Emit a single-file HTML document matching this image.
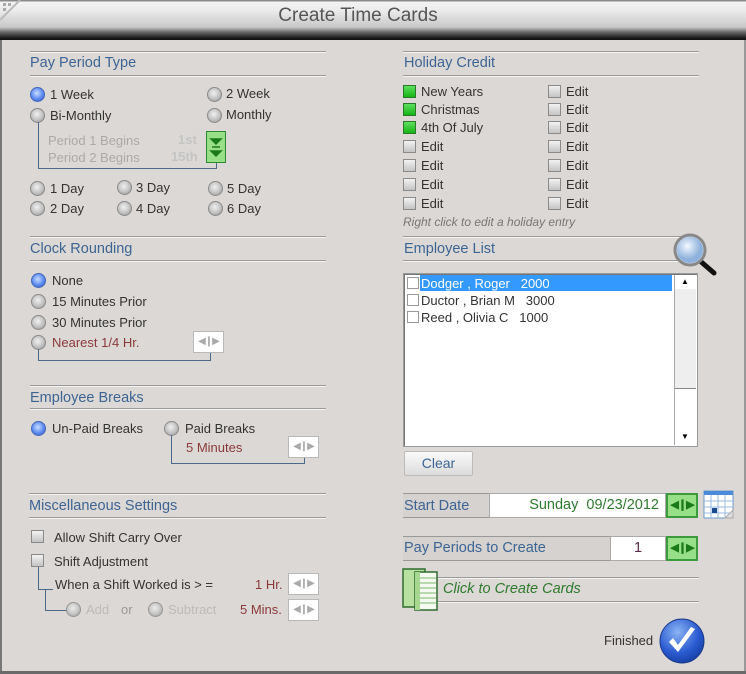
<!DOCTYPE html>
<html><head><meta charset="utf-8"><style>
*{margin:0;padding:0;box-sizing:border-box}
body{width:746px;height:674px;background:#dcd8d5;font-family:"Liberation Sans",Arial,sans-serif;font-size:13px;color:#333;position:relative;overflow:hidden}
.a{position:absolute;white-space:nowrap}
.t{line-height:15px}
.bar{position:absolute;left:0;top:0;width:746px;height:40px;background:linear-gradient(#8a8a8a 0,#8a8a8a 1px,#f4f4f4 2px,#ececec 10px,#c9c9c9 27px,#6a6a6a 32px,#1a1a1a 38px,#111 40px)}
.title{position:absolute;left:0;width:716px;top:5px;text-align:center;font-size:19px;color:#555}
.hl{position:absolute;height:2px;background:linear-gradient(#9a9a9a 1px,#f4f4f4 1px)}
.hd{position:absolute;font-size:14.5px;color:#3d6594;line-height:16px}
.r{position:absolute;width:15px;height:15px;border-radius:50%;background:radial-gradient(circle at 45% 40%,#f0f0f0,#c2c2c2 55%,#8e8e8e);border:1px solid #8a8a8a}
.r.on{background:radial-gradient(circle at 45% 40%,#c8dcff,#5e8cf0 55%,#2b50c0);border-color:#4467b8}
.cb{position:absolute;width:13px;height:13px;border:1px solid #8a8a8a;background:linear-gradient(#f2f2f2,#c4c4c4)}
.cb.g{background:linear-gradient(#5ee05e,#14b414);border-color:#2a7a2a}
.sp{position:absolute;width:31px;height:22px;background:#fff;border:1px solid #b8b8b8;color:#aaa;font-size:10px;text-align:center;line-height:20px;letter-spacing:-1px}
.gs{position:absolute;background:#98e088;border:2px solid #3c9a3c;color:#1a7a1a;font-size:11px;font-weight:bold;text-align:center;letter-spacing:-1px}
.ln{position:absolute;background:#4a6a88}
.gray{color:#aaa}
.brn{color:#8b3a3a}
</style></head><body>
<div class="bar"></div>
<svg class="a" style="left:0;top:0" width="22" height="22"><path d="M0 20 L20 0" stroke="#bbb" stroke-width="2"/><rect x="3" y="3" width="3" height="3" fill="#aaa"/><rect x="8" y="3" width="3" height="3" fill="#aaa"/><rect x="3" y="8" width="3" height="3" fill="#aaa"/></svg>
<div class="title">Create Time Cards</div>
<div class="a" style="left:0;top:40px;width:2px;height:634px;background:#777"></div>
<div class="a" style="left:744px;top:40px;width:2px;height:634px;background:#999"></div>
<div class="a" style="left:0;top:671px;width:746px;height:3px;background:#6a6a6a"></div>

<!-- Pay Period Type -->
<div class="hl" style="left:30px;top:51px;width:296px"></div>
<div class="hd" style="left:30px;top:55px">Pay Period Type</div>
<div class="hl" style="left:30px;top:75px;width:296px"></div>
<div class="r on" style="left:30px;top:87px"></div><div class="a t" style="left:50px;top:87px">1 Week</div>
<div class="r" style="left:207px;top:87px"></div><div class="a t" style="left:226px;top:86px">2 Week</div>
<div class="r" style="left:30px;top:108px"></div><div class="a t" style="left:50px;top:108px">Bi-Monthly</div>
<div class="r" style="left:207px;top:108px"></div><div class="a t" style="left:226px;top:107px">Monthly</div>
<div class="ln" style="left:38px;top:122px;width:1px;height:47px"></div>
<div class="ln" style="left:38px;top:168px;width:179px;height:1px"></div>
<div class="ln" style="left:216px;top:162px;width:1px;height:7px"></div>
<div class="a t gray" style="left:48px;top:133px">Period 1 Begins</div>
<div class="a t gray" style="left:48px;top:150px">Period 2 Begins</div>
<div class="a t" style="left:178px;top:132px;color:#c4c4c4;font-weight:bold">1st</div>
<div class="a t" style="left:171px;top:149px;color:#c4c4c4;font-weight:bold">15th</div>
<div class="a" style="left:206px;top:131px;width:20px;height:32px;background:#98e088;border:1px solid #2e8a2e"></div>
<svg class="a" style="left:206px;top:131px" width="20" height="32"><path d="M5 8 L15 8 L10 13Z M6 16 H14 M5 20 L15 20 L10 25Z" fill="#1a7a1a" stroke="#1a7a1a" stroke-width="1.5"/></svg>
<div class="r" style="left:30px;top:181px"></div><div class="a t" style="left:50px;top:181px">1 Day</div>
<div class="r" style="left:117px;top:180px"></div><div class="a t" style="left:136px;top:180px">3 Day</div>
<div class="r" style="left:208px;top:181px"></div><div class="a t" style="left:227px;top:181px">5 Day</div>
<div class="r" style="left:30px;top:201px"></div><div class="a t" style="left:50px;top:201px">2 Day</div>
<div class="r" style="left:117px;top:201px"></div><div class="a t" style="left:136px;top:201px">4 Day</div>
<div class="r" style="left:208px;top:201px"></div><div class="a t" style="left:227px;top:201px">6 Day</div>

<!-- Clock Rounding -->
<div class="hl" style="left:30px;top:236px;width:296px"></div>
<div class="hd" style="left:30px;top:241px">Clock Rounding</div>
<div class="hl" style="left:30px;top:260px;width:296px"></div>
<div class="r on" style="left:31px;top:273px"></div><div class="a t" style="left:52px;top:273px">None</div>
<div class="r" style="left:31px;top:294px"></div><div class="a t" style="left:52px;top:294px">15 Minutes Prior</div>
<div class="r" style="left:31px;top:315px"></div><div class="a t" style="left:52px;top:315px">30 Minutes Prior</div>
<div class="r" style="left:31px;top:335px"></div><div class="a t brn" style="left:52px;top:335px">Nearest 1/4 Hr.</div>
<div class="ln" style="left:38px;top:349px;width:1px;height:11px"></div>
<div class="ln" style="left:38px;top:360px;width:173px;height:1px"></div>
<div class="ln" style="left:210px;top:353px;width:1px;height:8px"></div>
<div class="sp" style="left:193px;top:331px">◀❙▶</div>

<!-- Employee Breaks -->
<div class="hl" style="left:30px;top:385px;width:296px"></div>
<div class="hd" style="left:30px;top:390px">Employee Breaks</div>
<div class="hl" style="left:30px;top:408px;width:296px"></div>
<div class="r on" style="left:31px;top:421px"></div><div class="a t" style="left:52px;top:421px">Un-Paid Breaks</div>
<div class="r" style="left:164px;top:421px"></div><div class="a t" style="left:185px;top:421px">Paid Breaks</div>
<div class="a t brn" style="left:186px;top:440px">5 Minutes</div>
<div class="ln" style="left:171px;top:435px;width:1px;height:28px"></div>
<div class="ln" style="left:171px;top:463px;width:134px;height:1px"></div>
<div class="ln" style="left:304px;top:458px;width:1px;height:6px"></div>
<div class="sp" style="left:288px;top:436px">◀❙▶</div>

<!-- Misc -->
<div class="hl" style="left:29px;top:493px;width:297px"></div>
<div class="hd" style="left:29px;top:498px">Miscellaneous Settings</div>
<div class="hl" style="left:29px;top:517px;width:297px"></div>
<div class="cb" style="left:31px;top:530px"></div><div class="a t" style="left:54px;top:530px">Allow Shift Carry Over</div>
<div class="cb" style="left:31px;top:554px"></div><div class="a t" style="left:54px;top:554px">Shift Adjustment</div>
<div class="ln" style="left:38px;top:567px;width:1px;height:23px"></div>
<div class="ln" style="left:38px;top:589px;width:15px;height:1px"></div>
<div class="ln" style="left:45px;top:589px;width:1px;height:21px"></div>
<div class="ln" style="left:45px;top:610px;width:22px;height:1px"></div>
<div class="a t" style="left:55px;top:577px">When a Shift Worked is &gt; =</div>
<div class="a t brn" style="left:255px;top:577px">1 Hr.</div>
<div class="sp" style="left:288px;top:573px">◀❙▶</div>
<div class="r" style="left:66px;top:602px;opacity:.85"></div><div class="a t" style="left:86px;top:602px;color:#bbb">Add</div>
<div class="a t" style="left:121px;top:602px;color:#999">or</div>
<div class="r" style="left:148px;top:602px;opacity:.85"></div><div class="a t" style="left:168px;top:602px;color:#bbb">Subtract</div>
<div class="a t brn" style="left:240px;top:602px">5 Mins.</div>
<div class="sp" style="left:288px;top:599px">◀❙▶</div>

<!-- Holiday Credit -->
<div class="hl" style="left:403px;top:51px;width:296px"></div>
<div class="hd" style="left:404px;top:55px">Holiday Credit</div>
<div class="hl" style="left:403px;top:75px;width:296px"></div>
<div class="cb g" style="left:403px;top:85px"></div><div class="a t" style="left:421px;top:84px">New Years</div>
<div class="cb g" style="left:403px;top:103px"></div><div class="a t" style="left:421px;top:102px">Christmas</div>
<div class="cb g" style="left:403px;top:121px"></div><div class="a t" style="left:421px;top:120px">4th Of July</div>
<div class="cb" style="left:403px;top:140px"></div><div class="a t" style="left:421px;top:139px">Edit</div>
<div class="cb" style="left:403px;top:159px"></div><div class="a t" style="left:421px;top:158px">Edit</div>
<div class="cb" style="left:403px;top:178px"></div><div class="a t" style="left:421px;top:177px">Edit</div>
<div class="cb" style="left:403px;top:197px"></div><div class="a t" style="left:421px;top:196px">Edit</div>
<div class="cb" style="left:548px;top:85px"></div><div class="a t" style="left:566px;top:84px">Edit</div>
<div class="cb" style="left:548px;top:103px"></div><div class="a t" style="left:566px;top:102px">Edit</div>
<div class="cb" style="left:548px;top:121px"></div><div class="a t" style="left:566px;top:120px">Edit</div>
<div class="cb" style="left:548px;top:140px"></div><div class="a t" style="left:566px;top:139px">Edit</div>
<div class="cb" style="left:548px;top:159px"></div><div class="a t" style="left:566px;top:158px">Edit</div>
<div class="cb" style="left:548px;top:178px"></div><div class="a t" style="left:566px;top:177px">Edit</div>
<div class="cb" style="left:548px;top:197px"></div><div class="a t" style="left:566px;top:196px">Edit</div>
<div class="a t" style="left:403px;top:215px;font-size:12px;font-style:italic;color:#777">Right click to edit a holiday entry</div>

<!-- Employee List -->
<div class="hl" style="left:403px;top:236px;width:296px"></div>
<div class="hd" style="left:404px;top:241px">Employee List</div>
<div class="hl" style="left:403px;top:260px;width:296px"></div>
<svg class="a" style="left:670px;top:232px" width="50" height="44"><defs><radialGradient id="mg" cx=".4" cy=".35"><stop offset="0" stop-color="#f4f8ff"/><stop offset="1" stop-color="#8fb2dc"/></radialGradient></defs><line x1="29" y1="28" x2="44" y2="41" stroke="#111" stroke-width="5" stroke-linecap="round"/><circle cx="20" cy="18" r="15" fill="#c8daf0" stroke="#888" stroke-width="3"/><circle cx="20" cy="18" r="13" fill="url(#mg)"/></svg>
<div class="a" style="left:403px;top:273px;width:295px;height:174px;background:#fff;border:1px solid #999;box-shadow:inset 1px 1px 0 #777"></div>
<div class="a" style="left:420px;top:275px;width:252px;height:16px;background:#3399ff"></div>
<div class="a" style="left:407px;top:277px;width:12px;height:12px;border:1px solid #999;background:#fff"></div>
<div class="a" style="left:407px;top:294px;width:12px;height:12px;border:1px solid #999;background:#fff"></div>
<div class="a" style="left:407px;top:311px;width:12px;height:12px;border:1px solid #999;background:#fff"></div>
<div class="a t" style="left:421px;top:276px;color:#fff">Dodger , Roger&nbsp;&nbsp;&nbsp;2000</div>
<div class="a t" style="left:421px;top:293px">Ductor , Brian M&nbsp;&nbsp;&nbsp;3000</div>
<div class="a t" style="left:421px;top:310px">Reed , Olivia C&nbsp;&nbsp;&nbsp;1000</div>
<div class="a" style="left:674px;top:275px;width:22px;height:170px;background:#fff;border-left:1px solid #aaa"></div>
<div class="a" style="left:675px;top:289px;width:21px;height:100px;background:#eee;border-bottom:1px solid #888"></div>
<div class="a" style="left:681px;top:277px;font-size:8px;color:#000">▲</div>
<div class="a" style="left:681px;top:432px;font-size:8px;color:#000">▼</div>

<div class="a" style="left:404px;top:451px;width:69px;height:25px;background:linear-gradient(#fafafa,#dcdcdc);border:1px solid #bbb;border-radius:2px;text-align:center;line-height:23px;font-size:14px;color:#3d6594">Clear</div>

<!-- Start Date -->
<div class="a" style="left:403px;top:493px;width:295px;height:25px;background:#d6d2cf;border-top:1px solid #999;border-bottom:1px solid #999"></div>
<div class="a" style="left:489px;top:493px;width:177px;height:25px;background:#fff;border:1px solid #aaa"></div>
<div class="hd" style="left:404px;top:498px">Start Date</div>
<div class="a" style="left:489px;top:497px;width:170px;text-align:right;font-size:14.5px;line-height:16px;color:#2e7a2e">Sunday&nbsp; 09/23/2012</div>
<div class="gs" style="left:666px;top:493px;width:32px;height:25px;line-height:21px">◀❙▶</div>
<svg class="a" style="left:703px;top:489px" width="32" height="32"><rect x="1" y="2" width="29" height="27" fill="#fff" stroke="#6a9acc"/><rect x="1" y="2" width="29" height="4" fill="#4a8ad8"/><path d="M1 12H30M1 18H30M1 24H30M8 6V29M15 6V29M22 6V29" stroke="#9abbe0" stroke-width="1"/><rect x="9" y="19" width="5" height="5" fill="#1a4a8a"/><path d="M22 29 L30 21 L30 29Z" fill="#ddd" stroke="#aaa"/></svg>

<!-- Pay Periods -->
<div class="a" style="left:403px;top:536px;width:295px;height:25px;background:#d6d2cf;border-top:1px solid #999;border-bottom:1px solid #999"></div>
<div class="a" style="left:610px;top:536px;width:56px;height:25px;background:#fff;border:1px solid #aaa"></div>
<div class="hd" style="left:404px;top:540px">Pay Periods to Create</div>
<div class="a" style="left:610px;top:540px;width:56px;text-align:center;font-size:14.5px;line-height:16px;color:#5a2a4a">1</div>
<div class="gs" style="left:666px;top:536px;width:32px;height:25px;line-height:21px">◀❙▶</div>

<!-- Create cards -->
<div class="hl" style="left:403px;top:577px;width:296px"></div>
<div class="hl" style="left:403px;top:601px;width:296px"></div>
<svg class="a" style="left:402px;top:568px" width="38" height="44"><rect x="1" y="1" width="22" height="38" fill="#b8e0a0" stroke="#2e6a2e" stroke-width="1.5"/><rect x="13" y="4" width="22" height="38" fill="#f4faf0" stroke="#2e6a2e" stroke-width="1.5"/><rect x="13" y="4" width="5" height="38" fill="#a8d890"/><path d="M18 10H34M18 15H34M18 20H34M18 25H34M18 30H34M18 35H34" stroke="#7ab870" stroke-width="1"/></svg>
<div class="a" style="left:443px;top:581px;font-size:14.5px;line-height:16px;font-style:italic;color:#2e7a2e">Click to Create Cards</div>

<!-- Finished -->
<div class="a t" style="left:604px;top:633px">Finished</div>
<svg class="a" style="left:658px;top:617px" width="48" height="48"><defs><radialGradient id="bg" cx=".4" cy=".3" r=".8"><stop offset="0" stop-color="#8ab4f4"/><stop offset=".6" stop-color="#2a5ad0"/><stop offset="1" stop-color="#123a9a"/></radialGradient></defs><circle cx="24" cy="24" r="22" fill="url(#bg)" stroke="#1a3a8a"/><path d="M11 25 L20 35 L37 12 L33 10 L20 28 L15 21Z" fill="#fff"/></svg>
</body></html>
